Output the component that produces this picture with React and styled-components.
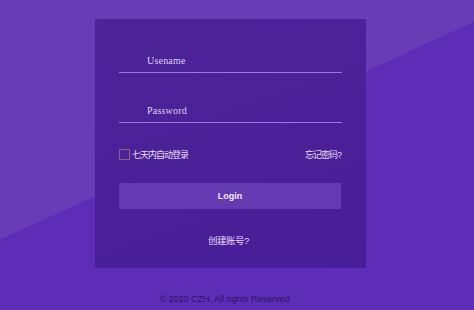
import styled, { createGlobalStyle } from "styled-components"

const Global = createGlobalStyle`
  html, body, #root {
    margin: 0;
    height: 100%;
  }
  body {
    font-family: "Liberation Sans", "Noto Sans CJK SC", sans-serif;
  }
`

export default function App(){
    return(
        <Page>
            <Global/>
            <Card>
                <Field placeholder="Usename"/>
                <Field type="password" placeholder="Password"/>
                <OptionRow>
                    <Remember>
                        <Box/>
                        七天内自动登录
                    </Remember>
                    <LinkText>忘记密码?</LinkText>
                </OptionRow>
                <LoginButton>Login</LoginButton>
                <CreateLink>创建账号?</CreateLink>
            </Card>
            <Footer>© 2020 CZH. All rights Reserved</Footer>
        </Page>
    )
}

const Page = styled.div`
    height: 100%;
    box-sizing: border-box;
    padding: 19px 0 0 95px;
    display: flex;
    flex-direction: column;
    align-items: flex-start;
    background: linear-gradient(155.3deg, #683cb7 45.4%, #5e2db8 45.4%);
`

const Card = styled.div`
    width: 271px;
    height: 249px;
    box-sizing: border-box;
    padding: 28px 24px 0;
    display: flex;
    flex-direction: column;
    background: linear-gradient(160deg, #4c2497 0%, #4a2098 60%, #471e99 100%);
`

const Field = styled.input`
    width: 223px;
    height: 26px;
    box-sizing: border-box;
    margin-bottom: 24px;
    padding: 1px 0 0 28px;
    border: none;
    border-bottom: 1px solid #9d74e6;
    background: transparent;
    outline: none;
    font-family: "Liberation Serif", "DejaVu Serif", serif;
    font-size: 10px;
    letter-spacing: 0.2px;
    color: #fff;
    &::placeholder {
        color: #dcd0f2;
    }
`

const OptionRow = styled.div`
    display: flex;
    justify-content: space-between;
    align-items: center;
    height: 14px;
    font-size: 9px;
    letter-spacing: -1px;
    color: #e6dcf6;
`

const Remember = styled.label`
    display: flex;
    align-items: center;
    gap: 2px;
`

const Box = styled.span`
    width: 9px;
    height: 9px;
    border: 1px solid #8e5f8c;
`

const LinkText = styled.span`
    margin-right: 1px;
`

const LoginButton = styled.button`
    margin-top: 22px;
    width: 222px;
    height: 26px;
    border: none;
    background: #6439b1;
    color: #f2ecfb;
    font-family: "Liberation Sans", sans-serif;
    font-size: 9px;
    font-weight: 600;
`

const CreateLink = styled.div`
    margin-top: 24px;
    margin-left: -4px;
    text-align: center;
    font-size: 9.5px;
    letter-spacing: -0.5px;
    color: #e6dcf6;
`

const Footer = styled.div`
    width: 271px;
    margin-top: 26px;
    margin-left: -6px;
    text-align: center;
    font-size: 9px;
    color: #29155e;
`
